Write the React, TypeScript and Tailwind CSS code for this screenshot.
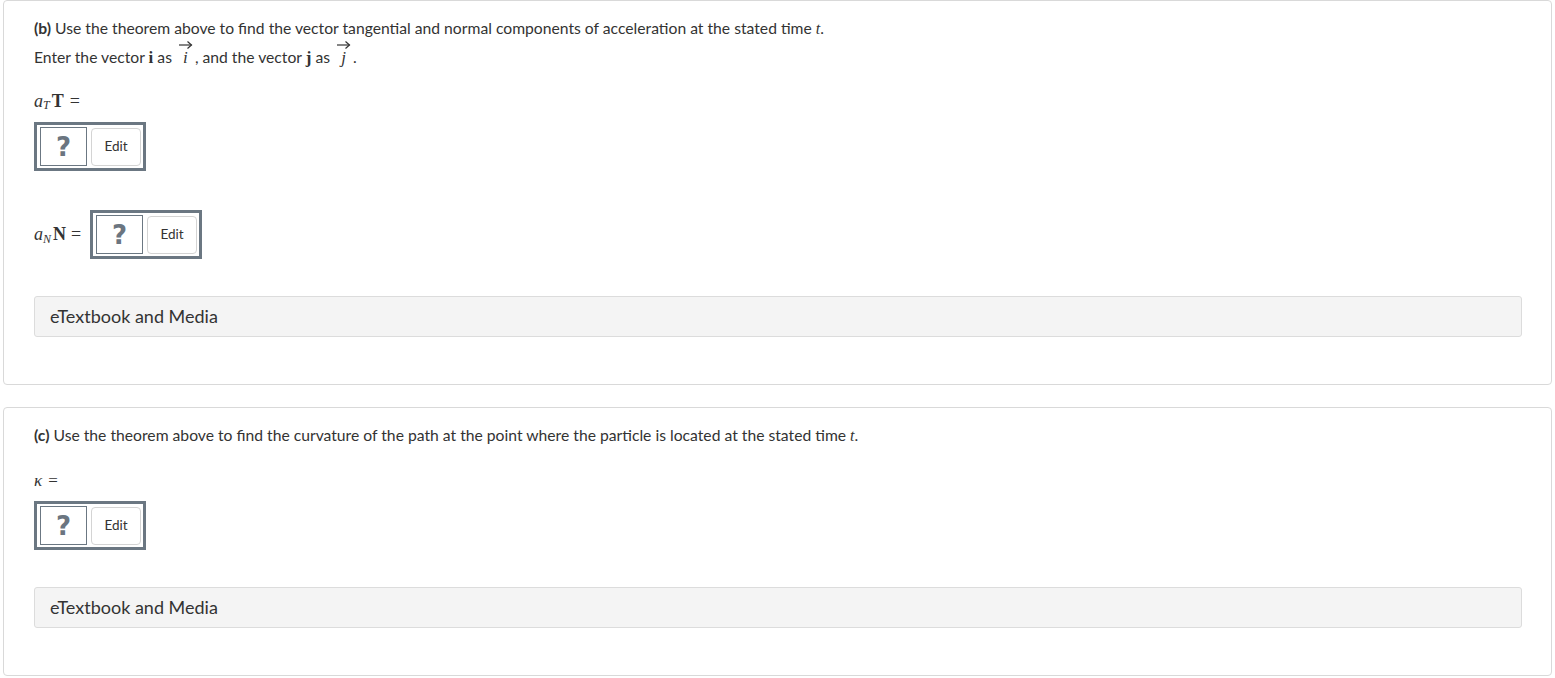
const serif = { fontFamily: '"Liberation Serif", "DejaVu Serif", serif' };

function Vec({ ch }: { ch: string }) {
  return (
    <span className="relative inline-block w-[19px] text-center text-[17px] italic" style={serif}>
      {ch}
      <svg className="absolute left-[2px] top-[-4px] w-[15px] h-[9px]" viewBox="0 0 15 9" fill="none" stroke="#333" strokeWidth="1.2">
        <line x1="1" y1="5" x2="13.5" y2="5" />
        <polyline points="9.5,1.5 13.5,5 9.5,8.5" />
      </svg>
    </span>
  );
}

function AnswerBox() {
  return (
    <div className="inline-flex items-center gap-[4px] border-[3px] border-[#6b7782] pl-[3px] pr-[2px] h-[49px] bg-white">
      <div className="w-[47px] h-[39px] border border-[#6b7782] flex items-center justify-center text-[26px] font-bold text-[#6b7580] leading-none" style={{ fontFamily: '"DejaVu Sans", "Liberation Sans", sans-serif' }}>
        ?
      </div>
      <button className="w-[50px] h-[38px] border border-[#d4d4d4] rounded-[4px] bg-white text-[13.5px] text-[#333]">Edit</button>
    </div>
  );
}

function Media() {
  return (
    <div className="h-[41px] bg-[#f4f4f4] border border-[#dcdcdc] rounded-[3px] flex items-center px-[15px] text-[18px] text-[#333]">
      eTextbook and Media
    </div>
  );
}

export default function App() {
  return (
    <div className="w-[1555px] h-[678px] bg-white px-[3px] overflow-hidden text-[#333]" style={{ fontFamily: 'Lato, "Open Sans", sans-serif' }}>
      {/* part b */}
      <div className="h-[385px] border border-[#d9d9d9] rounded-[4px] pl-[30px] pr-[29px] pt-[13px]">
        <div className="text-[15.7px] leading-[28px]">
          <b className="font-bold">(b)</b> Use the theorem above to find the vector tangential and normal components of acceleration at the stated time{' '}
          <i style={serif} className="text-[16px]">t</i>.
        </div>
        <div className="text-[15.7px] leading-[28px]">
          Enter the vector <b style={serif} className="text-[17px]">i</b> as <Vec ch="i" />, and the vector <b style={serif} className="text-[17px]">j</b> as <Vec ch="j" />.
        </div>
        <div className="mt-[19px] h-[20px] flex items-center text-[18px]" style={serif}>
          <i>a</i>
          <i className="text-[12px] mt-[8px]">T</i>
          <b className="ml-[2px]">T</b>
          <span className="ml-[6px]">=</span>
        </div>
        <div className="mt-[11px]">
          <AnswerBox />
        </div>
        <div className="mt-[39px] flex items-center">
          <span className="flex items-center text-[18px] mr-[3px] w-[53px]" style={serif}>
            <i>a</i>
            <i className="text-[12px] mt-[8px]">N</i>
            <b className="ml-[2px]">N</b>
            <span className="ml-[5px]">=</span>
          </span>
          <AnswerBox />
        </div>
        <div className="mt-[37px]">
          <Media />
        </div>
      </div>

      {/* part c */}
      <div className="mt-[22px] h-[269px] border border-[#d9d9d9] rounded-[4px] pl-[30px] pr-[29px] pt-[13px]">
        <div className="text-[15.7px] leading-[28px]">
          <b className="font-bold">(c)</b> Use the theorem above to find the curvature of the path at the point where the particle is located at the stated time{' '}
          <i style={serif} className="text-[16px]">t</i>.
        </div>
        <div className="mt-[21px] h-[20px] flex items-center text-[17px]" style={serif}>
          <i>κ</i>
          <span className="ml-[6px]">=</span>
        </div>
        <div className="mt-[10px]">
          <AnswerBox />
        </div>
        <div className="mt-[37px]">
          <Media />
        </div>
      </div>
    </div>
  );
}
